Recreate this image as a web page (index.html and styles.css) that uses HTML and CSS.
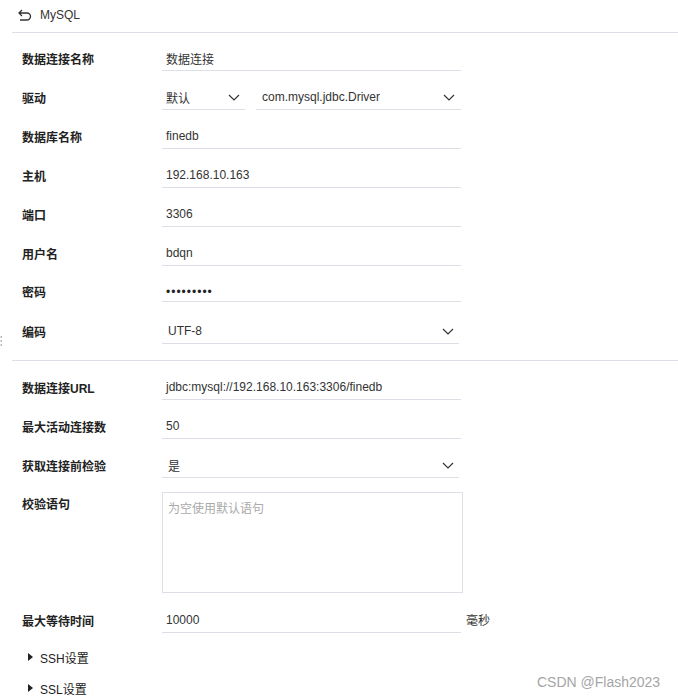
FILE: index.html
```html
<!DOCTYPE html>
<html lang="zh">
<head>
<meta charset="utf-8">
<link rel="stylesheet" href="styles.css">
</head>
<body>
<div class="page">
  <div class="header">
    <svg class="back" width="14" height="12" viewBox="0 0 14 12">
      <path d="M4 1 L1 4 L4 7 M1 4 H9 A3.5 3.5 0 0 1 9 11 H2" fill="none" stroke="#333" stroke-width="1.3"/>
    </svg>
    <span class="title">MySQL</span>
  </div>

  <div class="section first">
    <div class="row"><div class="label">数据连接名称</div><div class="field">数据连接</div></div>
    <div class="row"><div class="label">驱动</div>
      <div class="field select small">默认<svg class="chev" width="12" height="7" viewBox="0 0 12 7"><path d="M1 1 L6 6 L11 1" fill="none" stroke="#333" stroke-width="1.2"/></svg></div>
      <div class="field select driver">com.mysql.jdbc.Driver<svg class="chev" width="12" height="7" viewBox="0 0 12 7"><path d="M1 1 L6 6 L11 1" fill="none" stroke="#333" stroke-width="1.2"/></svg></div>
    </div>
    <div class="row"><div class="label">数据库名称</div><div class="field">finedb</div></div>
    <div class="row"><div class="label">主机</div><div class="field">192.168.10.163</div></div>
    <div class="row"><div class="label">端口</div><div class="field">3306</div></div>
    <div class="row"><div class="label">用户名</div><div class="field">bdqn</div></div>
    <div class="row pw"><div class="label">密码</div><div class="field password">•••••••••</div></div>
    <div class="row last"><div class="label">编码</div><div class="field select pad">UTF-8<svg class="chev" width="12" height="7" viewBox="0 0 12 7"><path d="M1 1 L6 6 L11 1" fill="none" stroke="#333" stroke-width="1.2"/></svg></div></div>
  </div>

  <div class="section second">
    <div class="row"><div class="label">数据连接URL</div><div class="field">jdbc:mysql://192.168.10.163:3306/finedb</div></div>
    <div class="row"><div class="label">最大活动连接数</div><div class="field">50</div></div>
    <div class="row"><div class="label">获取连接前检验</div><div class="field select pad">是<svg class="chev" width="12" height="7" viewBox="0 0 12 7"><path d="M1 1 L6 6 L11 1" fill="none" stroke="#333" stroke-width="1.2"/></svg></div></div>
    <div class="row top"><div class="label">校验语句</div><div class="textarea">为空使用默认语句</div></div>
    <div class="row"><div class="label">最大等待时间</div><div class="field">10000</div><div class="unit">毫秒</div></div>
    <div class="toggle"><span class="tri"></span>SSH设置</div>
    <div class="toggle"><span class="tri"></span>SSL设置</div>
  </div>

  <svg class="grip" width="3" height="14" viewBox="0 0 3 14"><circle cx="1.2" cy="2" r="0.8" fill="#888"/><circle cx="1.2" cy="6" r="0.8" fill="#888"/><circle cx="1.2" cy="10" r="0.8" fill="#888"/></svg>
  <div class="watermark">CSDN @Flash2023</div>
</div>
</body>
</html>
```

FILE: styles.css
```css
* { box-sizing: border-box; }
html, body { margin: 0; padding: 0; background: #fff; }
body {
  font-family: "Liberation Sans", "Noto Sans CJK SC", sans-serif;
  font-size: 12px;
  color: #333;
}
.page { position: relative; width: 678px; height: 698px; overflow: hidden; }

.header {
  height: 33px;
  margin-left: 12px;
  padding-left: 6px;
  border-bottom: 1px solid #dcdfe6;
  display: flex;
  align-items: center;
  padding-bottom: 2px;
}
.back { margin-right: 8px; }
.title { color: #333; font-size: 12px; }

.section { padding-left: 22px; }
.section.first { padding-top: 13px; padding-bottom: 16px; margin-left: 12px; padding-left: 10px; border-bottom: 1px solid #dcdfe6; }
.section.second { padding-top: 14px; }

.row { display: flex; align-items: center; margin-bottom: 14px; }
.row.pw { margin-bottom: 17px; }
.row.last { margin-bottom: 0; }
.row.top { align-items: flex-start; margin-bottom: 15px; }
.label {
  width: 140px;
  font-weight: bold;
  color: #222;
  font-size: 12px;
  flex-shrink: 0;
}
.row.top .label { padding-top: 3px; }

.field {
  width: 299px;
  height: 25px;
  padding-left: 4px;
  border-bottom: 1px solid #dcdfe6;
  display: flex;
  align-items: center;
  color: #333;
  font-size: 12px;
}
.field.password { height: 22px; font-size: 12px; letter-spacing: 1px; padding-top: 2px; color: #222; }
.field.select { justify-content: space-between; padding-right: 5px; }
.field.select.pad { padding-left: 6px; width: 297px; }
.field.small { width: 83px; margin-right: 11px; }
.field.driver { width: 205px; padding-left: 6px; padding-right: 6px; }
.chev { flex-shrink: 0; }

.textarea {
  width: 301px;
  height: 101px;
  border: 1px solid #dcdfe6;
  padding: 6px 5px;
  color: #aaa;
  font-size: 12px;
}
.unit { margin-left: 5px; color: #333; margin-top: -2px; }

.toggle {
  display: flex;
  align-items: center;
  height: 20px;
  margin-left: 6px;
  margin-bottom: 11px;
  color: #222;
  font-size: 12px;
}
.tri {
  width: 0; height: 0;
  border-top: 4px solid transparent;
  border-bottom: 4px solid transparent;
  border-left: 5px solid #222;
  margin-right: 7px;
}

.grip { position: absolute; left: 0; top: 335px; }
.watermark {
  position: absolute;
  left: 537px;
  top: 674px;
  font-family: "Liberation Sans", sans-serif;
  font-size: 14px;
  color: #a5a5a5;
}
```
